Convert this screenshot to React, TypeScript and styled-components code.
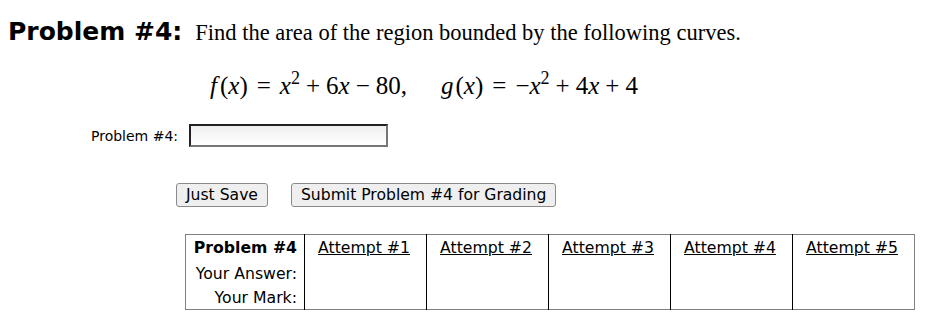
import React from 'react';
import styled, { createGlobalStyle } from 'styled-components';

const GlobalStyle = createGlobalStyle`
  body {
    margin: 0;
    background: #ffffff;
    color: #000000;
    font-family: "DejaVu Sans", Verdana, sans-serif;
  }
`;

const Page = styled.div`
  padding: 17px 0 0 8px;
  width: 934px;
  height: 323px;
  box-sizing: border-box;
  overflow: hidden;
`;

const Statement = styled.div`
  display: flex;
  align-items: baseline;
  gap: 13px;
  height: 30px;
  line-height: 30px;
  white-space: nowrap;
`;

const Heading = styled.span`
  font-weight: bold;
  font-size: 25px;
`;

const Prose = styled.span`
  font-family: "Liberation Serif", "Times New Roman", serif;
  font-size: 22.5px;
`;

const MathLine = styled.div`
  margin: 23px 0 0 202px;
  height: 32px;
  line-height: 32px;
  font-family: "Liberation Serif", "Times New Roman", serif;
  font-size: 25px;
  white-space: nowrap;
`;

const Var = styled.i<{ $gap?: number }>`
  font-style: italic;
  margin-right: ${(p) => p.$gap ?? 0}px;
`;

const Sup = styled.sup`
  font-size: 18px;
  line-height: 0;
  vertical-align: 10px;
`;

const Op = styled.span<{ $space?: number }>`
  padding: 0 ${(p) => p.$space ?? 9}px;
`;

const Second = styled.span`
  margin-left: 34px;
`;

const AnswerRow = styled.div`
  display: flex;
  align-items: center;
  gap: 11px;
  margin: 22px 0 0 83px;
  font-size: 14px;
`;

const AnswerInput = styled.input`
  width: 199px;
  height: 23px;
  box-sizing: border-box;
  border: 2px solid #767676;
  border-top-color: #222;
  border-left-color: #222;
  background: linear-gradient(#efefef, #ffffff);
  padding: 0 4px;
`;

const ButtonRow = styled.div`
  display: flex;
  gap: 23px;
  margin: 36px 0 0 168px;
`;

const Button = styled.button`
  height: 24px;
  padding: 0 9px;
  font-family: "DejaVu Sans", Verdana, sans-serif;
  font-size: 15.6px;
  color: #000;
  background: #efefef;
  border: 1px solid #8a8a8a;
  border-radius: 3px;
`;

const Attempts = styled.table`
  margin: 27px 0 0 177px;
  width: 730px;
  table-layout: fixed;
  border: 1px solid #808080;
  border-collapse: collapse;
  font-size: 15.7px;

  tr {
    height: 25px;
  }
  tr + tr td {
    padding-top: 2px;
  }
`;

const Cell = styled.td<{ $head?: boolean; $label?: boolean }>`
  padding: 0 7px 0 4px;
  text-align: ${(p) => (p.$label ? 'right' : 'center')};
  font-weight: ${(p) => (p.$head && p.$label ? 'bold' : 'normal')};
  border-left: 1px solid #000;
  vertical-align: middle;
  white-space: nowrap;

  &:first-child {
    border-left: none;
  }

  a {
    color: #000;
    text-decoration: underline;
  }
`;

const attempts = [1, 2, 3, 4, 5];

export default function App() {
  return (
    <Page>
      <GlobalStyle />
      <Statement>
        <Heading>Problem #4:</Heading>
        <Prose>Find the area of the region bounded by the following curves.</Prose>
      </Statement>
      <MathLine>
        <Var $gap={3}>f</Var>(<Var>x</Var>)<Op>=</Op>
        <Var>x</Var>
        <Sup>2</Sup>
        <Op $space={6}>+</Op>6<Var>x</Var>
        <Op $space={6}>−</Op>80,
        <Second>
          <Var $gap={2}>g</Var>(<Var>x</Var>)<Op>=</Op>−<Var>x</Var>
          <Sup>2</Sup>
          <Op $space={6}>+</Op>4<Var>x</Var>
          <Op $space={6}>+</Op>4
        </Second>
      </MathLine>
      <AnswerRow>
        <span>Problem #4:</span>
        <AnswerInput type="text" />
      </AnswerRow>
      <ButtonRow>
        <Button>Just Save</Button>
        <Button>Submit Problem #4 for Grading</Button>
      </ButtonRow>
      <Attempts>
        <colgroup>
          <col style={{ width: 119 }} />
          {attempts.map((n) => (
            <col key={n} style={{ width: 122 }} />
          ))}
        </colgroup>
        <tbody>
          <tr>
            <Cell $head $label>Problem #4</Cell>
            {attempts.map((n) => (
              <Cell key={n} $head>
                <a>Attempt #{n}</a>
              </Cell>
            ))}
          </tr>
          <tr>
            <Cell $label>Your Answer:</Cell>
            {attempts.map((n) => (
              <Cell key={n} />
            ))}
          </tr>
          <tr>
            <Cell $label>Your Mark:</Cell>
            {attempts.map((n) => (
              <Cell key={n} />
            ))}
          </tr>
        </tbody>
      </Attempts>
    </Page>
  );
}
